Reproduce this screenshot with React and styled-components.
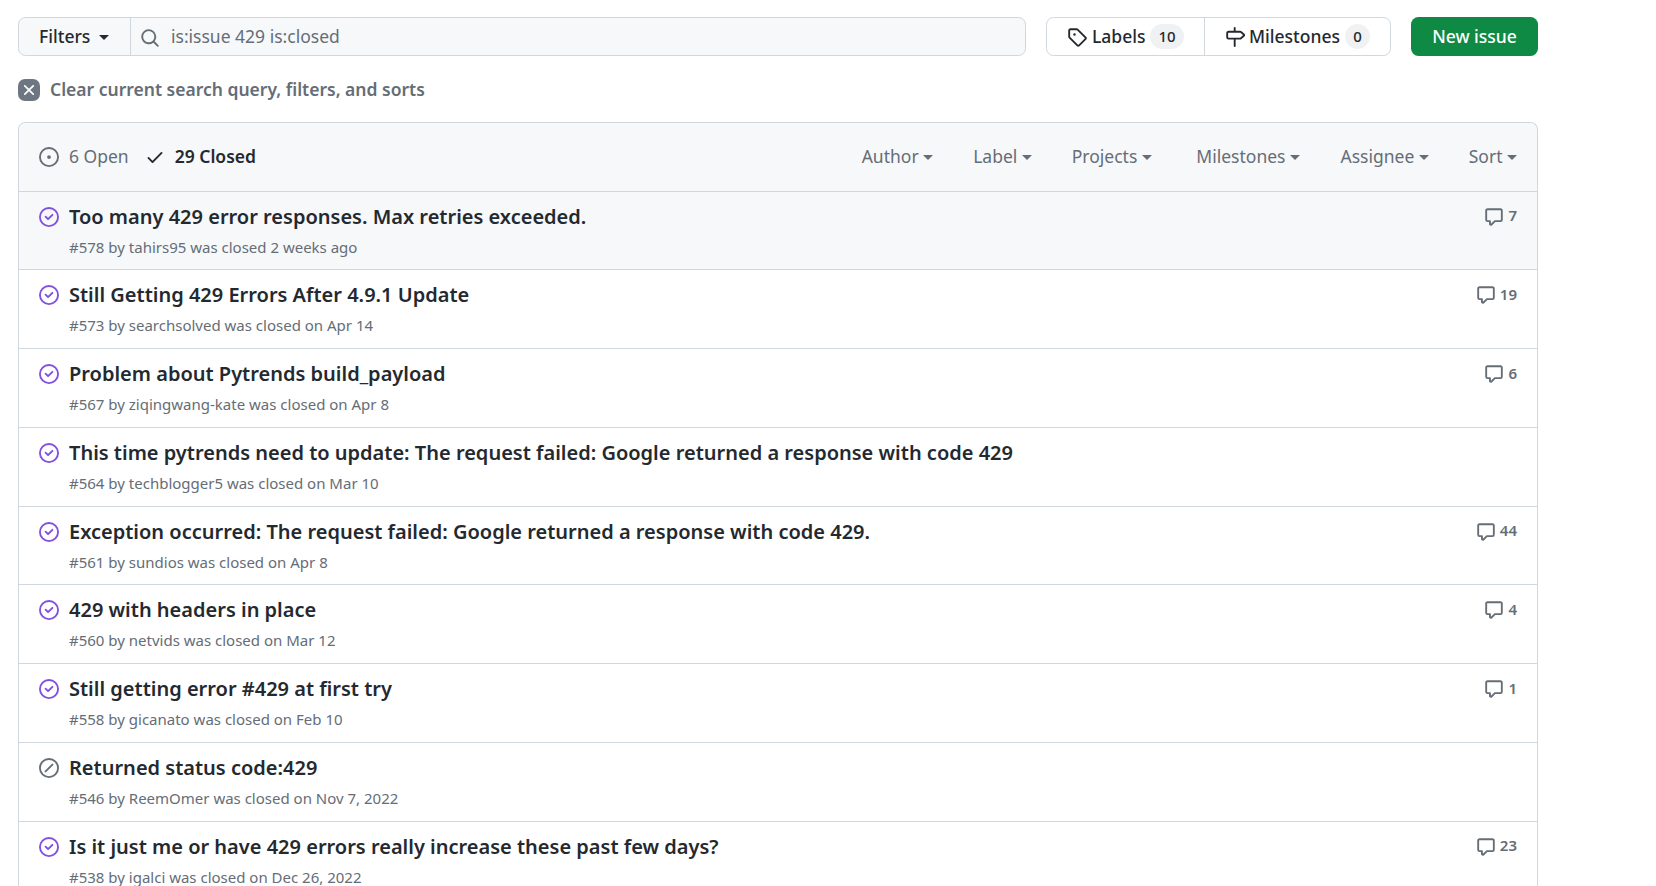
import React from "react";
import styled, { createGlobalStyle } from "styled-components";

const Global = createGlobalStyle`
  html, body { margin: 0; padding: 0; background: #fff; }
  body { font-family: "Noto Sans", sans-serif; color: #24292f; overflow: hidden; height: 886px; }
`;

const Page = styled.div`
  width: 1520px;
  margin-left: 18px;
  padding-top: 17px;
`;
const Toolbar = styled.div`
  display: flex;
  align-items: stretch;
  height: 39px;
`;
const SearchGroup = styled.div`
  display: flex;
  width: 1008px;
  border: 1px solid #d0d7de;
  border-radius: 7.5px;
  background: #f6f8fa;
  box-sizing: border-box;
`;
const FiltersButton = styled.div`
  display: flex;
  align-items: center;
  gap: 9px;
  width: 112px;
  padding: 0 0 2px 20px;
  box-sizing: border-box;
  border-right: 1px solid #d0d7de;
  font-size: 17.5px;
  font-weight: 500;
`;
const Caret = styled.span`
  display: inline-block;
  flex: none;
  width: 0;
  height: 0;
  margin-top: 3px;
  border-top: 5px solid currentColor;
  border-left: 5px solid transparent;
  border-right: 5px solid transparent;
`;
const SearchBox = styled.div`
  display: flex;
  align-items: center;
  gap: 11px;
  padding: 0 0 2px 9px;
  color: #656d76;
  font-size: 17.5px;
`;
const IconDown = styled.span`
  display: block;
  flex: none;
  margin-top: ${(p) => p.$by}px;
`;
const SegGroup = styled.div`
  display: flex;
  width: 345px;
  margin-left: 20px;
  border: 1px solid #d0d7de;
  border-radius: 7.5px;
  box-sizing: border-box;
`;
const SegItem = styled.div`
  display: flex;
  align-items: center;
  gap: ${(p) => p.$gap}px;
  padding: 0 0 2px 20px;
  box-sizing: border-box;
  width: ${(p) => p.$w}px;
  font-size: 17.5px;
  font-weight: 500;
  border-left: ${(p) => (p.$divider ? "1px solid #d0d7de" : "none")};
`;
const Counter = styled.span`
  display: inline-block;
  margin: 2px 0 0 ${(p) => p.$ml}px;
  min-width: 25px;
  padding: 0 8px;
  box-sizing: border-box;
  height: 25px;
  line-height: 25px;
  text-align: center;
  border-radius: 13px;
  background: #eff1f3;
  font-size: 15px;
`;
const NewIssue = styled.div`
  display: flex;
  align-items: center;
  justify-content: center;
  width: 127px;
  margin-left: 20px;
  padding-bottom: 2px;
  box-sizing: border-box;
  border-radius: 7.5px;
  background: #0f8a44;
  color: #fff;
  font-size: 17.5px;
  font-weight: 500;
`;
const ClearRow = styled.div`
  display: flex;
  align-items: center;
  gap: 10px;
  margin-top: 21px;
  height: 23px;
  color: #656d76;
  font-size: 17.5px;
  font-weight: 600;
`;
const ClearIcon = styled.span`
  display: flex;
  align-items: center;
  justify-content: center;
  width: 22px;
  height: 22px;
  margin-top: 3px;
  border-radius: 7px;
  background: #6e7781;
  color: #fff;
`;
const Box = styled.div`
  margin-top: 22px;
  border: 1px solid #d0d7de;
  border-bottom: none;
  border-radius: 7.5px 7.5px 0 0;
`;
const BoxHeader = styled.div`
  display: flex;
  align-items: center;
  justify-content: space-between;
  height: 67.6px;
  box-sizing: border-box;
  padding: 0 20px 2.6px;
  background: #f6f8fa;
  border-radius: 7.5px 7.5px 0 0;
  font-size: 17.5px;
`;
const States = styled.div`
  display: flex;
  align-items: center;
`;
const StateLink = styled.div`
  display: flex;
  align-items: center;
  gap: 10px;
  margin-right: 16px;
  color: ${(p) => (p.$active ? "#24292f" : "#656d76")};
  font-weight: ${(p) => (p.$active ? 600 : 400)};
`;
const Menus = styled.div`
  display: flex;
  align-items: center;
  color: #656d76;
`;
const Menu = styled.div`
  display: flex;
  align-items: center;
  gap: 4.5px;
  margin-left: ${(p) => p.$ml}px;
`;
const Row = styled.div`
  display: flex;
  height: 78.75px;
  box-sizing: border-box;
  padding: 10px 20px 0;
  border-top: 1px solid #d0d7de;
  background: ${(p) => (p.$hover ? "#f6f8fa" : "#fff")};
`;
const StateIcon = styled.div`
  flex: none;
  width: 20px;
  height: 20px;
  margin-top: 5px;
  margin-right: 10px;
  color: ${(p) => (p.$skip ? "#656d76" : "#8250df")};
`;
const RowBody = styled.div`
  flex: 1;
  min-width: 0;
`;
const Title = styled.div`
  font-size: 20px;
  font-weight: 600;
  line-height: 30px;
`;
const Meta = styled.div`
  margin-top: 4px;
  font-size: 15px;
  line-height: 22px;
  color: #656d76;
`;
const Comments = styled.div`
  display: flex;
  align-items: center;
  gap: 4px;
  height: 30px;
  margin-top: -1.5px;
  font-size: 15px;
  font-weight: 600;
  color: #656d76;
`;

const Oct = ({ d, size = 20, color }) => (
  <svg width={size} height={size} viewBox="0 0 16 16" fill={color || "currentColor"} style={{ display: "block", flex: "none" }}>
    <path fillRule="evenodd" d={d} />
  </svg>
);

const P = {
  closed:
    "M11.28 6.78a.75.75 0 0 0-1.06-1.06L7.25 8.69 5.78 7.22a.75.75 0 0 0-1.06 1.06l2 2a.75.75 0 0 0 1.06 0l3.5-3.5Z M16 8A8 8 0 1 1 0 8a8 8 0 0 1 16 0Zm-1.5 0a6.5 6.5 0 1 0-13 0 6.5 6.5 0 0 0 13 0Z",
  skip:
    "M0 8a8 8 0 1 1 16 0A8 8 0 0 1 0 8Zm1.5 0a6.5 6.5 0 1 0 13 0 6.5 6.5 0 0 0-13 0Zm9.78-2.22-5.5 5.5a.749.749 0 0 1-1.275-.326.749.749 0 0 1 .215-.734l5.5-5.5a.751.751 0 0 1 1.042.018.751.751 0 0 1 .018 1.042Z",
  open:
    "M8 9.5a1.5 1.5 0 1 0 0-3 1.5 1.5 0 0 0 0 3Z M8 0a8 8 0 1 1 0 16A8 8 0 0 1 8 0ZM1.5 8a6.5 6.5 0 1 0 13 0 6.5 6.5 0 0 0-13 0Z",
  check:
    "M13.78 4.22a.75.75 0 0 1 0 1.06l-7.25 7.25a.75.75 0 0 1-1.06 0L2.22 9.28a.751.751 0 0 1 .018-1.042.751.751 0 0 1 1.042-.018L6 10.94l6.72-6.72a.75.75 0 0 1 1.06 0Z",
  search:
    "M10.68 11.74a6 6 0 0 1-7.922-8.982 6 6 0 0 1 8.982 7.922l3.04 3.04a.749.749 0 0 1-.326 1.275.749.749 0 0 1-.734-.215ZM11.5 7a4.499 4.499 0 1 0-8.997 0A4.499 4.499 0 0 0 11.5 7Z",
  tag:
    "M1 7.775V2.75C1 1.784 1.784 1 2.75 1h5.025c.464 0 .91.184 1.238.513l6.25 6.25a1.75 1.75 0 0 1 0 2.474l-5.026 5.026a1.75 1.75 0 0 1-2.474 0l-6.25-6.25A1.752 1.752 0 0 1 1 7.775Zm1.5 0c0 .066.026.13.073.177l6.25 6.25a.25.25 0 0 0 .354 0l5.025-5.025a.25.25 0 0 0 0-.354l-6.25-6.25a.25.25 0 0 0-.177-.073H2.75a.25.25 0 0 0-.25.25ZM6 5a1 1 0 1 1 0 2 1 1 0 0 1 0-2Z",
  milestone:
    "M7.75 0a.75.75 0 0 1 .75.75V3h3.634c.414 0 .814.147 1.13.414l2.07 1.75a1.75 1.75 0 0 1 0 2.672l-2.07 1.75a1.75 1.75 0 0 1-1.13.414H8.5v5.25a.75.75 0 0 1-1.5 0V10H2.75A1.75 1.75 0 0 1 1 8.25v-3.5C1 3.784 1.784 3 2.75 3H7V.75A.75.75 0 0 1 7.75 0Zm4.384 8.5a.25.25 0 0 0 .161-.06l2.07-1.75a.248.248 0 0 0 0-.38l-2.07-1.75a.25.25 0 0 0-.161-.06H2.75a.25.25 0 0 0-.25.25v3.5c0 .138.112.25.25.25h9.384Z",
  comment:
    "M1 2.75C1 1.784 1.784 1 2.75 1h10.5c.966 0 1.75.784 1.75 1.75v7.5A1.75 1.75 0 0 1 13.25 12H9.06l-2.573 2.573A1.458 1.458 0 0 1 4 13.543V12H2.75A1.75 1.75 0 0 1 1 10.25Zm1.75-.25a.25.25 0 0 0-.25.25v7.5c0 .138.112.25.25.25h2a.75.75 0 0 1 .75.75v2.19l2.72-2.72a.749.749 0 0 1 .53-.22h4.5a.25.25 0 0 0 .25-.25v-7.5a.25.25 0 0 0-.25-.25Z",
  x: "M3.72 3.72a.75.75 0 0 1 1.06 0L8 6.94l3.22-3.22a.749.749 0 0 1 1.275.326.749.749 0 0 1-.215.734L9.06 8l3.22 3.22a.749.749 0 0 1-.326 1.275.749.749 0 0 1-.734-.215L8 9.06l-3.22 3.22a.751.751 0 0 1-1.042-.018.751.751 0 0 1-.018-1.042L6.94 8 3.72 4.78a.75.75 0 0 1 0-1.06Z",
};

const issues = [
  { t: "Too many 429 error responses. Max retries exceeded.", m: "#578 by tahirs95 was closed 2 weeks ago", c: 7, hover: true },
  { t: "Still Getting 429 Errors After 4.9.1 Update", m: "#573 by searchsolved was closed on Apr 14", c: 19 },
  { t: "Problem about Pytrends build_payload", m: "#567 by ziqingwang-kate was closed on Apr 8", c: 6 },
  { t: "This time pytrends need to update: The request failed: Google returned a response with code 429", m: "#564 by techblogger5 was closed on Mar 10" },
  { t: "Exception occurred: The request failed: Google returned a response with code 429.", m: "#561 by sundios was closed on Apr 8", c: 44 },
  { t: "429 with headers in place", m: "#560 by netvids was closed on Mar 12", c: 4 },
  { t: "Still getting error #429 at first try", m: "#558 by gicanato was closed on Feb 10", c: 1 },
  { t: "Returned status code:429", m: "#546 by ReemOmer was closed on Nov 7, 2022", skip: true },
  { t: "Is it just me or have 429 errors really increase these past few days?", m: "#538 by igalci was closed on Dec 26, 2022", c: 23 },
];

const menus = [
  ["Author", 0],
  ["Label", 40],
  ["Projects", 40],
  ["Milestones", 44.5],
  ["Assignee", 40.5],
  ["Sort", 40],
];

export default function App() {
  return (
    <Page>
      <Global />
      <Toolbar>
        <SearchGroup>
          <FiltersButton>
            Filters <Caret />
          </FiltersButton>
          <SearchBox>
            <IconDown $by={4}><Oct d={P.search} /></IconDown>
            is:issue 429 is:closed
          </SearchBox>
        </SearchGroup>
        <SegGroup>
          <SegItem $w={157} $gap={5}>
            <IconDown $by={3}><Oct d={P.tag} /></IconDown>
            Labels <Counter $ml={0}>10</Counter>
          </SegItem>
          <SegItem $w={186} $gap={4} $divider>
            <IconDown $by={3}><Oct d={P.milestone} /></IconDown>
            Milestones <Counter $ml={1}>0</Counter>
          </SegItem>
        </SegGroup>
        <NewIssue>New issue</NewIssue>
      </Toolbar>
      <ClearRow>
        <ClearIcon>
          <Oct d={P.x} size={18} />
        </ClearIcon>
        Clear current search query, filters, and sorts
      </ClearRow>
      <Box>
        <BoxHeader>
          <States>
            <StateLink>
              <IconDown $by={2}><Oct d={P.open} /></IconDown>6 Open
            </StateLink>
            <StateLink $active>
              <IconDown $by={2}><Oct d={P.check} /></IconDown>29 Closed
            </StateLink>
          </States>
          <Menus>
            {menus.map(([m, ml]) => (
              <Menu key={m} $ml={ml}>
                {m} <Caret />
              </Menu>
            ))}
          </Menus>
        </BoxHeader>
        {issues.map((i) => (
          <Row key={i.m} $hover={i.hover}>
            <StateIcon $skip={i.skip}>
              <Oct d={i.skip ? P.skip : P.closed} />
            </StateIcon>
            <RowBody>
              <Title>{i.t}</Title>
              <Meta>{i.m}</Meta>
            </RowBody>
            {i.c != null && (
              <Comments>
                <IconDown $by={3}><Oct d={P.comment} /></IconDown>
                {i.c}
              </Comments>
            )}
          </Row>
        ))}
      </Box>
    </Page>
  );
}
